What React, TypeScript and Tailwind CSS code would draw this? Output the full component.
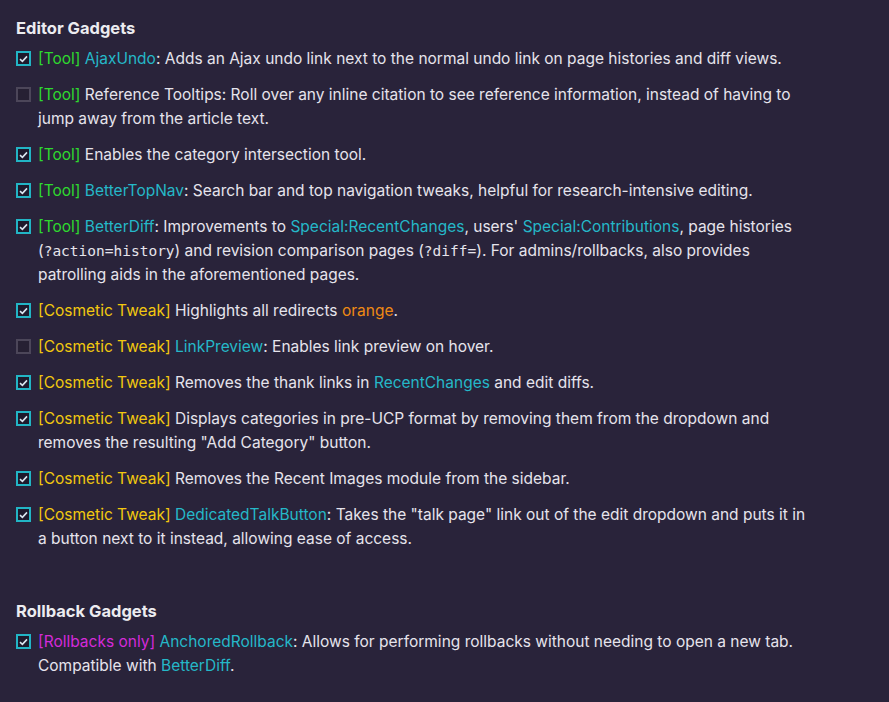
import React from "react";

// colours picked from the reference
const tool = "text-[#2fd92f]";
const cosmetic = "text-[#f2c80f]";
const rollback = "text-[#d42ad9]";
const link = "text-[#25b8c8]";

const Check = ({ on }: { on: boolean }) =>
  on ? (
    <span className="mt-[4px] flex h-[15px] w-[15px] shrink-0 items-center justify-center border-2 border-[#22b5c5] bg-[#1e1a2c]">
      <svg width="9" height="8" viewBox="0 0 9 8" fill="none">
        <path d="M1 4.2 L3.4 6.4 L8 1.4" stroke="#d9e6ef" strokeWidth="1.6" />
      </svg>
    </span>
  ) : (
    <span className="mt-[4px] h-[15px] w-[15px] shrink-0 border-2 border-[#4c4659] bg-[#262033]" />
  );

const Code = ({ children }: { children: React.ReactNode }) => (
  <code className="font-['DejaVu_Sans_Mono',monospace] text-[14.5px]">{children}</code>
);

const Item = ({ on = true, children }: { on?: boolean; children: React.ReactNode }) => (
  <li className="flex gap-[7px]">
    <Check on={on} />
    <p>{children}</p>
  </li>
);

const Heading = ({ children }: { children: React.ReactNode }) => (
  <h2 className="mb-[7px] text-[16.5px] font-bold text-[#ececf0]">{children}</h2>
);

export default function App() {
  return (
    <div className="min-h-[702px] w-full bg-[#29233a] px-4 pt-4 font-['Inter',sans-serif] text-[15.5px] leading-6 text-[#e6e4ec]">
      <Heading>Editor Gadgets</Heading>
      <ul className="space-y-3">
        <Item>
          <span className={tool}>[Tool]</span> <span className={link}>AjaxUndo</span>: Adds an Ajax undo link next to the
          normal undo link on page histories and diff views.
        </Item>
        <Item on={false}>
          <span className={tool}>[Tool]</span> Reference Tooltips: Roll over any inline citation to see reference
          information, instead of having to
          <br />
          jump away from the article text.
        </Item>
        <Item>
          <span className={tool}>[Tool]</span> Enables the category intersection tool.
        </Item>
        <Item>
          <span className={tool}>[Tool]</span> <span className={link}>BetterTopNav</span>: Search bar and top navigation
          tweaks, helpful for research-intensive editing.
        </Item>
        <Item>
          <span className={tool}>[Tool]</span> <span className={link}>BetterDiff</span>: Improvements to{" "}
          <span className={link}>Special:RecentChanges</span>, users'{" "}
          <span className={link}>Special:Contributions</span>, page histories
          <br />
          (<Code>?action=history</Code>) and revision comparison pages (<Code>?diff=</Code>). For admins/rollbacks, also
          provides
          <br />
          patrolling aids in the aforementioned pages.
        </Item>
        <Item>
          <span className={cosmetic}>[Cosmetic Tweak]</span> Highlights all redirects{" "}
          <span className="text-[#ef8a14]">orange</span>.
        </Item>
        <Item on={false}>
          <span className={cosmetic}>[Cosmetic Tweak]</span> <span className={link}>LinkPreview</span>: Enables link
          preview on hover.
        </Item>
        <Item>
          <span className={cosmetic}>[Cosmetic Tweak]</span> Removes the thank links in{" "}
          <span className={link}>RecentChanges</span> and edit diffs.
        </Item>
        <Item>
          <span className={cosmetic}>[Cosmetic Tweak]</span> Displays categories in pre-UCP format by removing them from
          the dropdown and
          <br />
          removes the resulting "Add Category" button.
        </Item>
        <Item>
          <span className={cosmetic}>[Cosmetic Tweak]</span> Removes the Recent Images module from the sidebar.
        </Item>
        <Item>
          <span className={cosmetic}>[Cosmetic Tweak]</span> <span className={link}>DedicatedTalkButton</span>: Takes the
          "talk page" link out of the edit dropdown and puts it in
          <br />a button next to it instead, allowing ease of access.
        </Item>
      </ul>

      <div className="mt-12">
        <Heading>Rollback Gadgets</Heading>
        <ul>
          <Item>
            <span className={rollback}>[Rollbacks only]</span> <span className={link}>AnchoredRollback</span>: Allows for
            performing rollbacks without needing to open a new tab.
            <br />
            Compatible with <span className={link}>BetterDiff</span>.
          </Item>
        </ul>
      </div>
    </div>
  );
}
